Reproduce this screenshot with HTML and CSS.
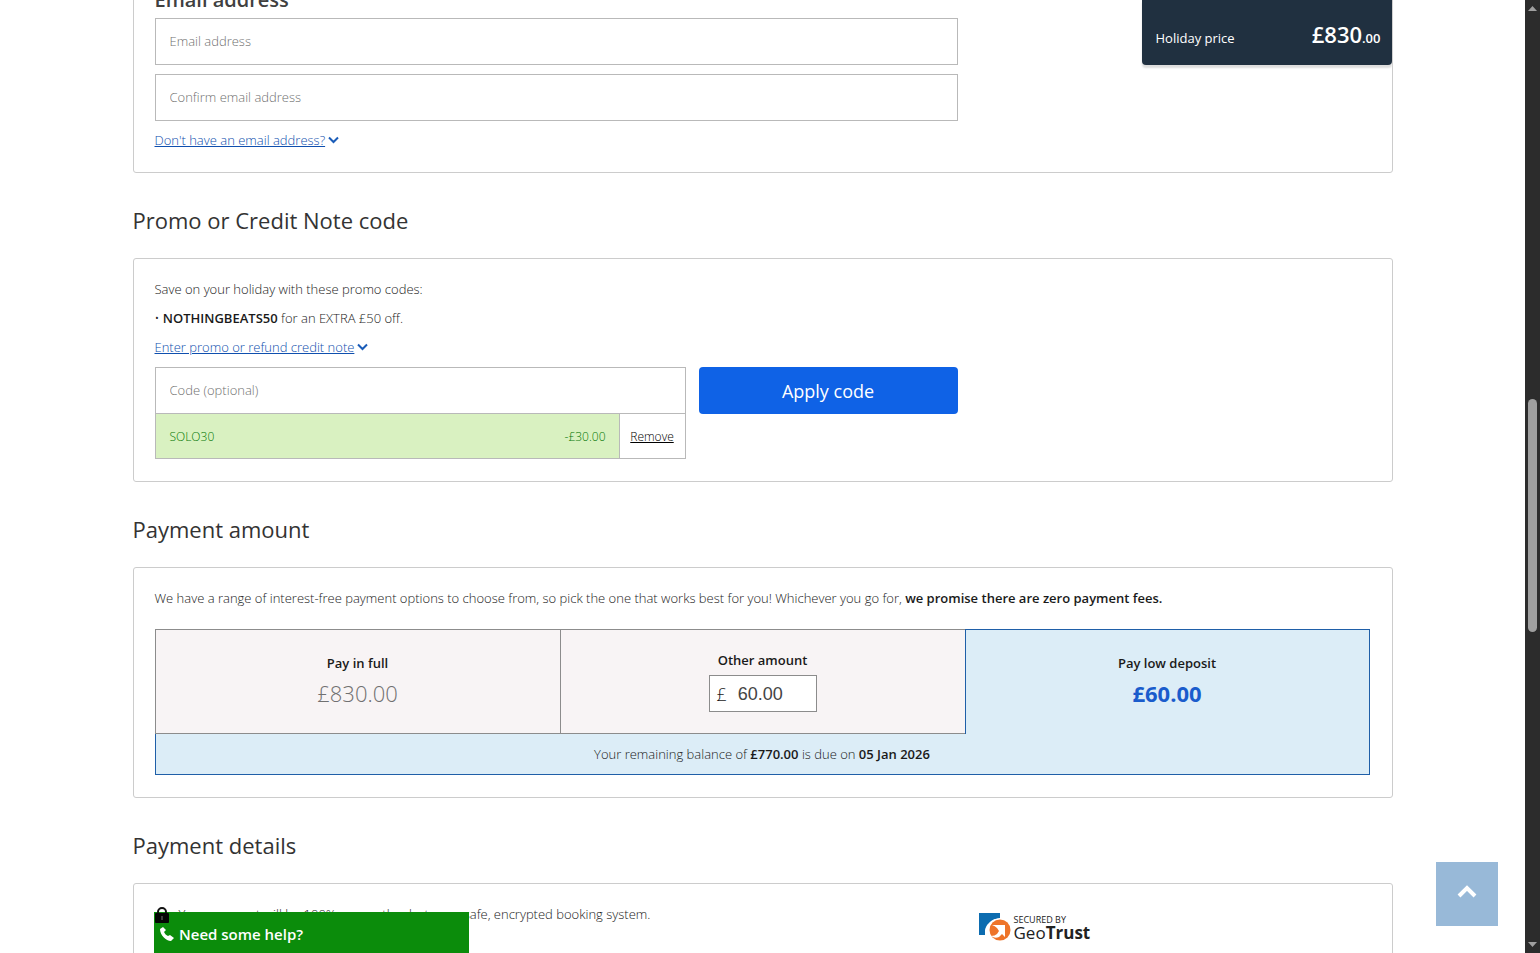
FILE: index.html
```html
<!DOCTYPE html>
<html lang="en">
<head>
<meta charset="UTF-8" />
<meta name="viewport" content="width=device-width, initial-scale=1" />
<title>Passenger and payment details</title>
<link rel="stylesheet" href="styles.css">
</head>
<body>

<div class="page">
  <main class="container">

    <aside class="price-bar">
      <span>Holiday price</span>
      <strong>£830<small>.00</small></strong>
    </aside>

    <section class="card card-email">
      <h3>Email address</h3>
      <div class="form-col">
        <input type="email" class="field" placeholder="Email address" aria-label="Email address" />
        <input type="email" class="field" placeholder="Confirm email address" aria-label="Confirm email address" />
      </div>
      <p class="toggle">
        <a href="#no-email">Don't have an email address?</a>
        <svg class="chevron" viewBox="0 0 11 8"><path d="M1 1.5l4.500 4.500 4.500-4.500" /></svg>
      </p>
    </section>

    <h2>Promo or Credit Note code</h2>
    <section class="card">
      <p>Save on your holiday with these promo codes:</p>
      <p class="promo-item">• <b>NOTHINGBEATS50</b> for an EXTRA £50 off.</p>
      <p class="toggle">
        <a href="#promo">Enter promo or refund credit note</a>
        <svg class="chevron" viewBox="0 0 11 8"><path d="M1 1.500l4.500 4.500 4.500-4.500" /></svg>
      </p>
      <form class="promo-form">
        <div>
          <input type="text" class="field" placeholder="Code (optional)" aria-label="Promo code" />
          <div class="applied">
            <div class="applied-code"><span>SOLO30</span><span>-£30.00</span></div>
            <a href="#remove">Remove</a>
          </div>
        </div>
        <button type="button" class="apply">Apply code</button>
      </form>
    </section>

    <h2>Payment amount</h2>
    <section class="card">
      <p>We have a range of interest-free payment options to choose from, so pick the one that works best for you! Whichever you go for, <b>we promise there are zero payment fees.</b></p>
      <div class="options">
        <button type="button" class="option">
          <b>Pay in full</b>
          <span class="amount">£830.00</span>
        </button>
        <div class="option option-other">
          <label for="other">Other amount</label>
          <div class="money">
            <span>£</span>
            <input type="text" id="other" value="60.00" />
          </div>
        </div>
        <button type="button" class="option selected">
          <b>Pay low deposit</b>
          <span class="amount">£60.00</span>
        </button>
        <p class="balance">Your remaining balance of <b>£770.00</b> is due on <b>05 Jan 2026</b></p>
      </div>
    </section>

    <h2>Payment details</h2>
    <section class="card card-details">
      <p class="secure">
        <svg class="lock" viewBox="0 0 14 16">
          <path d="M3 8V5a4 4 0 0 1 8 0v3" fill="none" stroke="#111" stroke-width="2" />
          <rect x="0" y="6" width="14" height="10" rx="1" fill="#050505" />
          <path d="M7 9v4" stroke="#777" stroke-width="1" />
        </svg>
        <span>Your payment will be 100% secure thanks to our safe, encrypted booking system.</span>
      </p>
      <div class="geotrust">
        <svg viewBox="0 0 32 28" width="32" height="28">
          <path d="M0 0h21v6H16C11 8 7 12 6 17v5H0z" fill="#0c6cb0" />
          <circle cx="21" cy="17" r="12" fill="#fff" />
          <circle cx="21" cy="17" r="10.500" fill="#ee7429" />
          <path d="M13 12l13 0v12l-3-3-3 3q-4 2-8-1 4 0 6-2l2-3-2-3q-2-2-5-3z" fill="#fff" />
        </svg>
        <div>
          <span class="geo-top">SECURED BY</span>
          <span class="geo-name">Geo<b>Trust</b></span>
        </div>
      </div>
    </section>
  </main>

  <button type="button" class="help">
    <svg viewBox="0 0 14 14" width="14" height="14"><path d="M3 0L0 2C0 8 6 14 11 14l3-3-4-3-2 1C6 8 5 7 4 5l2-2z" fill="#fff" /></svg>
    Need some help?
  </button>
  <a href="#top" class="to-top" aria-label="Back to top">
    <svg viewBox="0 0 20 13" width="20" height="13"><path d="M2 11l8-8 8 8" fill="none" stroke="#fff" stroke-width="4" /></svg>
  </a>
</div>

<div class="scrollbar">
  <svg viewBox="0 0 9 5" width="9" height="5"><path d="M0 5l4.500-5L9 5z" fill="#a0a0a0" /></svg>
  <div class="thumb"></div>
  <svg viewBox="0 0 9 5" width="9" height="5"><path d="M0 0l4.500 5L9 0z" fill="#a0a0a0" /></svg>
</div>

</body>
</html>
```

FILE: styles.css
```css
* { box-sizing: border-box; }
body {
  margin: 0;
  height: 100vh;
  display: flex;
  overflow: hidden;
  font-family: "Open Sans", "Liberation Sans", sans-serif;
  font-size: 13px;
  font-weight: 300;
  line-height: 20px;
  color: #1a1a1a;
  background: #fff;
}
p { margin: 0; }
b { font-weight: 600; }
button, input { font: inherit; color: inherit; }
a { color: #0f4fae; }

.page {
  flex: 1;
  position: relative;
  overflow: hidden;
}
.container {
  display: flow-root;
  position: relative;
  max-width: 1260px;
  margin: 0 auto;
}
h2 {
  margin: 32px 0 23px;
  font-size: 22px;
  line-height: 30px;
  font-weight: 500;
  color: #333;
}
h3 {
  margin: 0;
  font-size: 20px;
  line-height: 30px;
  font-weight: 600;
  color: #404040;
}

.card {
  padding: 20px 22px 22px 21px;
  border: 1px solid #ccc;
  border-radius: 3px;
}
/* page is scrolled down, the heading is half out of view */
.card-email {
  margin-top: -36px;
}
.form-col {
  display: flex;
  flex-direction: column;
  gap: 9px;
  margin-top: 3px;
  max-width: 803px;
}
.field {
  display: block;
  width: 100%;
  height: 47px;
  padding: 0 14px 2px;
  border: 1px solid #b9b9b9;
  border-radius: 0;
  background: #fff;
}
.field::placeholder { color: #707070; opacity: 1; }
.toggle {
  display: flex;
  align-items: center;
  gap: 3px;
  margin-top: 9px;
}
.chevron {
  width: 11px;
  height: 8px;
  fill: none;
  stroke: #1a5cb8;
  stroke-width: 2;
}

.price-bar {
  position: absolute;
  top: 0;
  right: 1px;
  width: 250px;
  height: 65px;
  padding: 0 11px 0 14px;
  display: flex;
  align-items: baseline;
  justify-content: space-between;
  line-height: 68px;
  background: #203040;
  color: #fff;
  font-weight: 400;
  border-radius: 0 0 4px 4px;
  box-shadow: 0 3px 2px #ddd;
}
.price-bar strong { font-size: 22px; font-weight: 600; }
.price-bar small { font-size: 13px; }

.promo-item { margin-top: 9px; }
.promo-form {
  display: grid;
  grid-template-columns: 1fr 259px;
  gap: 13px;
  align-items: start;
  max-width: 803px;
  margin-top: 10px;
}
.applied {
  display: flex;
  height: 45px;
  border: 1px solid #b9b9b9;
  border-top: 0;
  font-size: 12px;
}
.applied-code {
  flex: 1;
  display: flex;
  align-items: center;
  justify-content: space-between;
  padding: 2px 13px 0 14px;
  background: #d9f1c1;
  color: #067806;
  border-right: 1px solid #b9b9b9;
}
.applied a {
  width: 65px;
  line-height: 46px;
  text-align: center;
  color: #000;
}
.apply {
  height: 47px;
  border: 0;
  border-radius: 4px;
  background: #0f62e6;
  color: #fff;
  font-size: 18px;
  font-weight: 400;
  cursor: pointer;
}

.options {
  display: grid;
  grid-template-columns: 1fr 1fr 1fr;
  margin-top: 21px;
  background: #dcedf7;
}
.option {
  display: flex;
  flex-direction: column;
  align-items: center;
  height: 105px;
  padding: 23px 0 0;
  border: 1px solid #8c8c8c;
  border-right: 0;
  border-radius: 0;
  background: #f8f4f5;
}
.option-other { padding-top: 20px; }
.option label { font-weight: 600; }
.amount {
  margin-top: 5px;
  font-size: 22px;
  line-height: 30px;
  color: #707070;
}
.selected {
  border: 1px solid #1f5fa8;
  border-bottom: 0;
  background: #dcedf7;
}
.selected .amount { color: #1a5ccc; font-weight: 700; }
.money {
  display: flex;
  align-items: center;
  width: 108px;
  height: 37px;
  margin-top: 5px;
  padding-left: 7px;
  border: 1px solid #8c8c8c;
  background: #fff;
  font-size: 18px;
}
.money input {
  width: 78px;
  padding: 0 0 0 11px;
  border: 0;
  background: none;
  color: #444;
  font-family: "Liberation Sans", Arial, sans-serif;
  font-weight: 400;
}
.balance {
  grid-column: 1 / -1;
  padding: 10px 0;
  text-align: center;
  border: 1px solid #1f5fa8;
  border-top: 0;
}

.card-details {
  display: grid;
  grid-template-columns: 2fr 1fr;
  gap: 42px;
  height: 240px;
}
.secure {
  display: flex;
  align-items: flex-start;
  gap: 10px;
}
.lock {
  position: relative;
  z-index: 3;
  width: 14px;
  height: 16px;
  margin-top: 3px;
}
.geotrust {
  display: flex;
  align-items: flex-start;
  gap: 3px;
  padding-top: 9px;
  color: #222;
}
.geotrust div {
  display: flex;
  flex-direction: column;
}
.geo-top { font-size: 9px; line-height: 14px; font-weight: 400; }
.geo-name { font-size: 17px; line-height: 12px; font-weight: 400; }
.geo-name b { font-weight: 700; }

.help {
  position: absolute;
  left: 154px;
  bottom: 0;
  z-index: 2;
  display: flex;
  align-items: center;
  gap: 5px;
  width: 315px;
  height: 41px;
  padding: 3px 6px 0;
  border: 0;
  background: #0b8c0b;
  color: #fff;
  font-size: 15px;
  font-weight: 600;
}
.to-top {
  position: absolute;
  right: 27px;
  bottom: 27px;
  display: flex;
  align-items: center;
  justify-content: center;
  width: 62px;
  height: 64px;
  padding-bottom: 6px;
  background: #98b9d8;
}

.scrollbar {
  display: flex;
  flex-direction: column;
  align-items: center;
  width: 15px;
  padding: 6px 0;
  background: #2c2c2c;
}
.thumb {
  width: 9px;
  height: 233px;
  margin: 388px 0 auto;
  border-radius: 5px;
  background: #9f9f9f;
}
```
